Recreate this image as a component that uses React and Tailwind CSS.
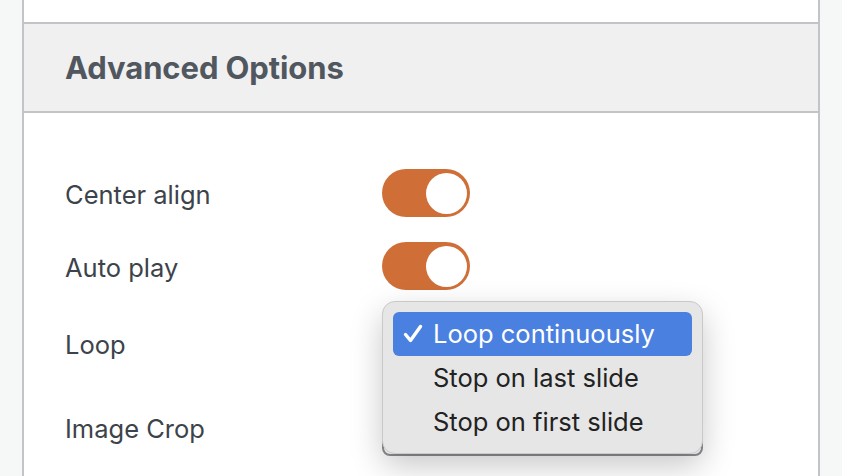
import React from "react";

function Toggle() {
  return (
    <div className="w-[88px] h-[48px] rounded-full bg-[#cf6f37] flex items-center justify-end pr-[3px]">
      <div className="w-[41px] h-[41px] rounded-full bg-white" />
    </div>
  );
}

export default function App() {
  const font = { fontFamily: "Inter, 'Noto Sans', sans-serif" };
  return (
    <div className="w-[842px] h-[476px] bg-[#f6f7f7] px-[22px] overflow-hidden" style={font}>
      <div className="h-full bg-white border-x-2 border-[#c3c4c7] flex flex-col">
        <div className="h-[24px] border-b-2 border-[#c3c4c7]" />
        <div className="h-[89px] bg-[#f0f0f1] border-b-2 border-[#c3c4c7] flex items-center pl-[41px]">
          <h2 className="text-[31px] font-bold text-[#50575e] tracking-[-0.1px] pt-[2px]">Advanced Options</h2>
        </div>
        <div className="relative flex-1 pl-[41px] pt-[56px] flex flex-col gap-[25px] text-[#3c434a] text-[25.5px]">
          <div className="flex items-center h-[48px]">
            <div className="w-[317px] pt-[5px]">Center align</div>
            <Toggle />
          </div>
          <div className="flex items-center h-[48px]">
            <div className="w-[317px] pt-[5px]">Auto play</div>
            <Toggle />
          </div>
          <div className="flex items-center h-[57px]">
            <div className="w-[317px] pt-[3px]">Loop</div>
            <div className="w-[321px] h-[57px] rounded-[8px] border-2 border-[#2c5fa8] bg-white" />
          </div>
          <div className="flex items-center h-[56px] mt-[3px]">
            <div className="w-[317px] pt-[3px]">Image Crop</div>
            <div className="w-[321px] h-[56px] rounded-[8px] border-2 border-[#8c8f94] bg-white" />
          </div>

          <div className="absolute left-[358px] top-[188px] w-[321px] h-[153px] rounded-[13px] bg-[#e6e6e6] border border-[#c9c9c9] shadow-[0_12px_32px_rgba(0,0,0,0.22)] px-[10px] pt-[10px] text-[#222222] text-[25.5px]">
            <div className="h-[44px] rounded-[6px] bg-[#4a80e0] text-white flex items-center">
              <svg width="20" height="20" viewBox="0 0 20 20" className="ml-[10px] mr-[10px]">
                <path d="M2.5 10.5 L7.5 16.5 L17.5 2.5" fill="none" stroke="white" strokeWidth="3.4" strokeLinecap="round" strokeLinejoin="round" />
              </svg>
              <span>Loop continuously</span>
            </div>
            <div className="h-[44px] flex items-center pl-[40px]">Stop on last slide</div>
            <div className="h-[44px] flex items-center pl-[40px]">Stop on first slide</div>
          </div>
        </div>
      </div>
    </div>
  );
}
